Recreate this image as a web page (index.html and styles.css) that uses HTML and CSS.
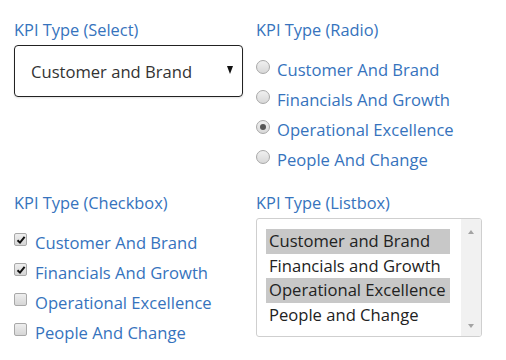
FILE: index.html
```html
<!DOCTYPE html>
<html>
<head>
<meta charset="utf-8">
<link rel="stylesheet" href="styles.css">
</head>
<body>
<div class="grid">
  <div class="field">
    <div class="label">KPI Type (Select)</div>
    <div class="select">
      <span class="select-text">Customer and Brand</span>
      <span class="caret"></span>
    </div>
  </div>
  <div class="field">
    <div class="label">KPI Type (Radio)</div>
    <div class="options">
      <div class="opt"><span class="radio"></span><span>Customer And Brand</span></div>
      <div class="opt"><span class="radio"></span><span>Financials And Growth</span></div>
      <div class="opt"><span class="radio checked"></span><span>Operational Excellence</span></div>
      <div class="opt"><span class="radio"></span><span>People And Change</span></div>
    </div>
  </div>
  <div class="field">
    <div class="label">KPI Type (Checkbox)</div>
    <div class="options">
      <div class="opt"><span class="check checked"><svg viewBox="0 0 10 10" width="10" height="10"><path d="M1.5 5.2 L4 7.6 L8.6 1.8" fill="none" stroke="#111" stroke-width="2"/></svg></span><span>Customer And Brand</span></div>
      <div class="opt"><span class="check checked"><svg viewBox="0 0 10 10" width="10" height="10"><path d="M1.5 5.2 L4 7.6 L8.6 1.8" fill="none" stroke="#111" stroke-width="2"/></svg></span><span>Financials And Growth</span></div>
      <div class="opt"><span class="check"></span><span>Operational Excellence</span></div>
      <div class="opt"><span class="check"></span><span>People And Change</span></div>
    </div>
  </div>
  <div class="field">
    <div class="label">KPI Type (Listbox)</div>
    <div class="listbox">
      <div class="list-items">
        <div class="item sel">Customer and Brand</div>
        <div class="item">Financials and Growth</div>
        <div class="item sel">Operational Excellence</div>
        <div class="item">People and Change</div>
      </div>
      <div class="scrollbar">
        <span class="arrow-up"></span>
        <span class="arrow-down"></span>
      </div>
    </div>
  </div>
</div>
</body>
</html>
```

FILE: styles.css
```css
html, body {
  margin: 0;
  padding: 0;
  background: #fff;
}
body {
  font-family: "Open Sans", "Liberation Sans", sans-serif;
  padding: 20px 0 0 14px;
}
.grid {
  display: grid;
  grid-template-columns: 229px 226px;
  column-gap: 13px;
  row-gap: 19px;
  align-items: start;
}
.label {
  font-size: 16.4px;
  line-height: 20px;
  color: #3673bd;
  margin-bottom: 5px;
}
.select {
  box-sizing: border-box;
  height: 52px;
  border: 1px solid #222;
  border-radius: 4px;
  display: flex;
  align-items: center;
  justify-content: space-between;
  padding: 0 9px 0 16px;
  box-shadow: 0 1px 2px rgba(0,0,0,0.12);
}
.select-text {
  font-size: 16.6px;
  color: #333;
}
.caret {
  width: 0;
  height: 0;
  border-left: 3.5px solid transparent;
  border-right: 3.5px solid transparent;
  border-top: 8px solid #111;
  margin-bottom: 2px;
}
.options {
  padding-top: 9px;
}
.opt {
  display: flex;
  align-items: center;
  height: 30px;
  font-size: 16.6px;
  color: #3673bd;
}
.radio {
  box-sizing: border-box;
  width: 14px;
  height: 14px;
  border-radius: 50%;
  border: 1px solid #a8a8a8;
  background: linear-gradient(#f0f0f0, #d8d8d8);
  margin-right: 7px;
  margin-bottom: 5px;
  display: flex;
  align-items: center;
  justify-content: center;
  flex: none;
}
.radio.checked::after {
  content: "";
  width: 6px;
  height: 6px;
  border-radius: 50%;
  background: #555;
}
.check {
  box-sizing: border-box;
  width: 13px;
  height: 13px;
  border-radius: 2px;
  border: 1px solid #a8a8a8;
  background: linear-gradient(#eeeeee, #d6d6d6);
  margin-right: 8px;
  margin-bottom: 5px;
  display: flex;
  align-items: center;
  justify-content: center;
  flex: none;
}
.listbox {
  box-sizing: border-box;
  height: 119px;
  border: 1px solid #cfcfcf;
  border-radius: 3px;
  display: flex;
  overflow: hidden;
}
.list-items {
  flex: 1;
  padding: 10px 11px 0 9px;
}
.item {
  font-size: 16.6px;
  line-height: 24.5px;
  color: #222;
  padding-left: 3px;
  white-space: nowrap;
}
.item.sel {
  background: #c8c8c8;
}
.scrollbar {
  width: 20px;
  background: #f1f1f1;
  display: flex;
  flex-direction: column;
  justify-content: space-between;
  align-items: center;
  padding: 11px 0 8px;
  box-sizing: border-box;
}
.arrow-up {
  width: 0;
  height: 0;
  border-left: 3.5px solid transparent;
  border-right: 3.5px solid transparent;
  border-bottom: 4px solid #a3a3a3;
}
.arrow-down {
  width: 0;
  height: 0;
  border-left: 3.5px solid transparent;
  border-right: 3.5px solid transparent;
  border-top: 4px solid #a3a3a3;
}
```
